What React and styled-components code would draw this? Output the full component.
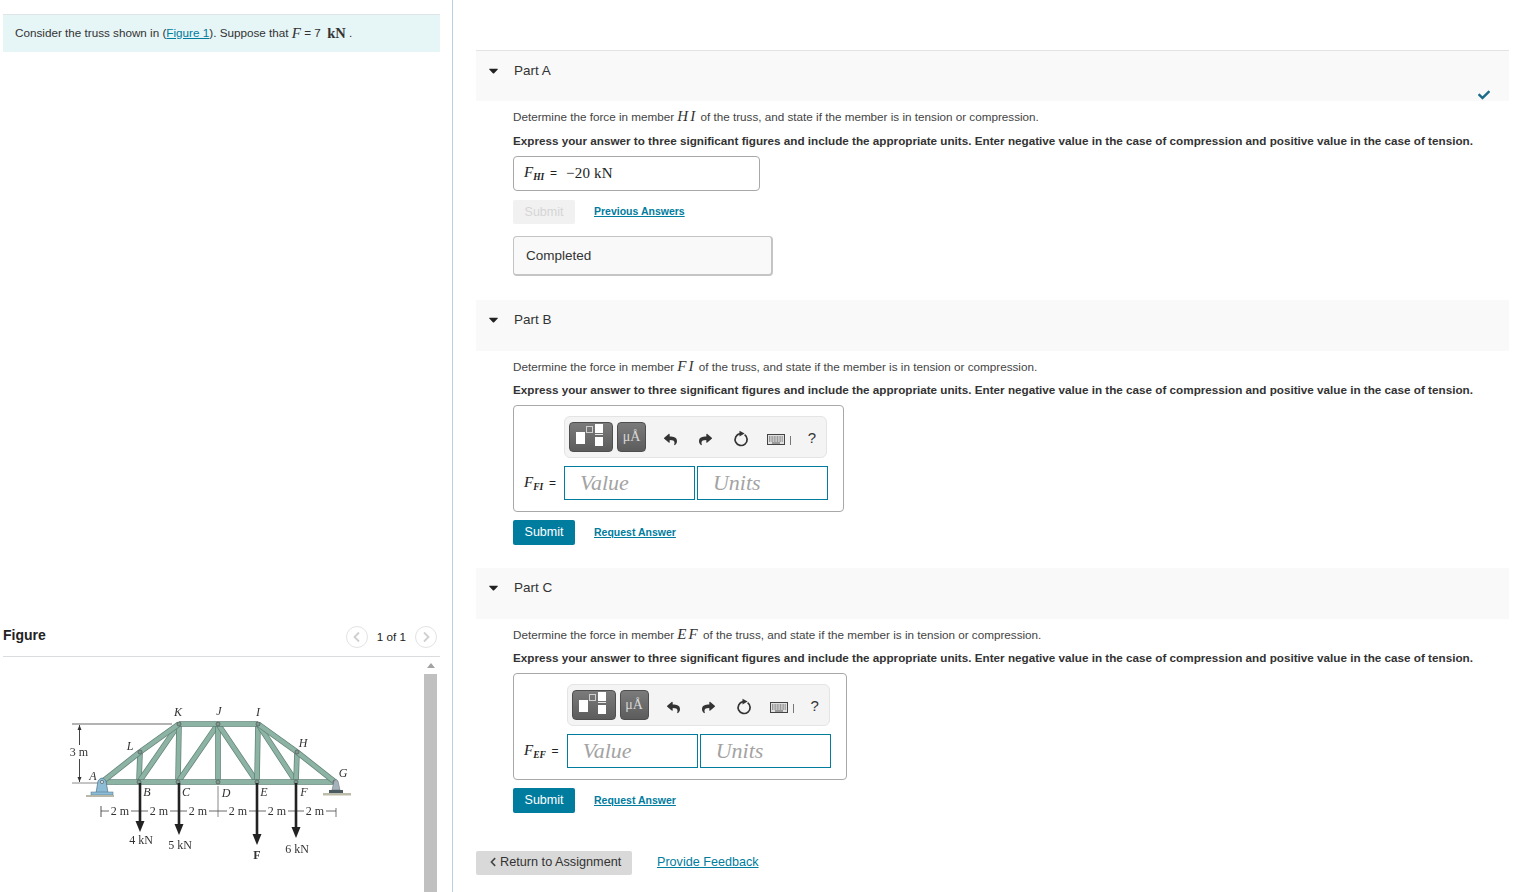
import React from "react";
import styled, { createGlobalStyle } from "styled-components";
import { FaReply, FaShare, FaCheck, FaChevronLeft, FaCaretDown } from "react-icons/fa";

const Global = createGlobalStyle`
  html, body { margin: 0; padding: 0; height: 892px; overflow: hidden; background: #fff; }
  body { font-family: "Liberation Sans", Arial, sans-serif; font-size: 11.7px; color: #333; }
`;

const Page = styled.div`
  display: flex;
  height: 892px;
`;
const LeftColumn = styled.aside`
  width: 453px;
  box-sizing: border-box;
  height: 892px;
  border-right: 1px solid #bccfe2;
  padding: 14px 0 0 3px;
  display: flex;
  flex-direction: column;
  flex: none;
`;
const InfoBox = styled.div`
  width: 437px;
  height: 38px;
  box-sizing: border-box;
  background: #e6f5f6;
  border-top: 1px solid #dfe5e6;
  padding: 0 12px 2px;
  display: flex;
  align-items: center;
  white-space: pre;
`;
const Link = styled.a`
  color: #007c9e;
  text-decoration: underline;
  font-size: ${(p) => p.$size || 11.7}px;
  font-weight: ${(p) => (p.$bold ? "bold" : "normal")};
`;
const ActionLink = styled(Link)`
  margin-bottom: 2px;
`;
const Var = styled.span`
  font-family: "Liberation Serif", "Times New Roman", serif;
  font-style: ${(p) => (p.$upright ? "normal" : "italic")};
  font-weight: ${(p) => (p.$upright ? "bold" : "normal")};
  font-size: ${(p) => p.$size || 15}px;
  line-height: 0;
  letter-spacing: ${(p) => p.$space || 0}px;
  color: #333;
`;
const FigurePanel = styled.section`
  margin-top: auto;
  width: 437px;
  height: 267px;
  flex: none;
  display: flex;
  flex-direction: column;
`;
const FigureHeader = styled.header`
  height: 32px;
  flex: none;
  box-sizing: border-box;
  border-bottom: 1px solid #d9dde0;
  display: flex;
  align-items: flex-start;
  color: #222;
`;
const FigureTitle = styled.h3`
  margin: 2px auto 0 0;
  font-size: 14px;
  line-height: 16px;
  font-weight: bold;
  color: #222;
`;
const Pager = styled.div`
  display: flex;
  align-items: center;
  gap: 9px;
  margin: 1px 3px 0 0;
  line-height: 22px;
`;
const PagerButton = styled.span`
  width: 22px;
  height: 22px;
  box-sizing: border-box;
  border: 1px solid #e3e3e3;
  border-radius: 50%;
  display: flex;
  align-items: center;
  justify-content: center;
`;
const FigureBody = styled.div`
  flex: 1;
  display: flex;
  min-height: 0;
`;
const FigureCanvas = styled.div`
  flex: 1;
  padding: 43px 0 0 57px;
`;
const Scrollbar = styled.div`
  width: 13px;
  margin-right: 3px;
  flex: none;
  display: flex;
  flex-direction: column;
  align-items: center;
  padding-top: 6px;
`;
const ScrollArrow = styled.span`
  width: 0;
  height: 0;
  border-left: 4px solid transparent;
  border-right: 4px solid transparent;
  border-bottom: 5px solid #a3a3a3;
  margin-bottom: 6px;
`;
const ScrollThumb = styled.span`
  width: 13px;
  flex: 1;
  background: #c0c0c0;
`;
const RightColumn = styled.main`
  flex: none;
  width: 1033px;
  margin-left: 23px;
  padding-top: 50px;
`;
const Part = styled.section`
  margin-bottom: ${(p) => p.$after}px;
`;
const PartHeader = styled.header`
  position: relative;
  height: 51px;
  box-sizing: border-box;
  background: #f9f9f9;
  border-top: ${(p) => (p.$first ? "1px solid #e3e3e3" : "0")};
  padding: 11px 0 0 12px;
  display: flex;
  align-items: flex-start;
  line-height: 17px;
  font-size: 13.5px;
  color: #333;
`;
const Caret = styled.span`
  width: 11px;
  height: 16px;
  margin-right: 15px;
  display: flex;
  align-items: center;
  justify-content: center;
  color: #222;
  font-size: 15px;
`;
const DoneMark = styled.span`
  position: absolute;
  right: 19px;
  bottom: 0;
  height: 12px;
  display: flex;
  align-items: center;
  color: #1c6b88;
  font-size: 12px;
`;
const PartBody = styled.div`
  padding-left: 37px;
`;
const Prompt = styled.p`
  margin: 8px 0 0;
  line-height: 16px;
  color: #444;
  white-space: pre;
`;
const Instruction = styled.p`
  margin: ${(p) => p.$gap}px 0 0;
  line-height: 16px;
  font-weight: bold;
  color: #333;
  white-space: pre;
`;
const AnswerBox = styled.div`
  margin-top: 7px;
  width: 247px;
  height: 35px;
  box-sizing: border-box;
  border: 1px solid #a8a8a8;
  border-radius: 4px;
  padding-left: 10px;
  display: flex;
  align-items: center;
  white-space: pre;
  font-family: "Liberation Serif", serif;
  font-size: 15px;
  color: #222;
`;
const AnswerValue = styled.span`
  margin-left: 9px;
  letter-spacing: 0.2px;
`;
const Label = styled.span`
  margin-bottom: 2px;
  font-family: "Liberation Serif", serif;
  font-size: 15px;
  font-style: italic;
  color: #222;
  white-space: pre;
`;
const Sub = styled.sub`
  font-size: 9.5px;
  font-weight: bold;
  vertical-align: -3px;
  line-height: 0;
`;
const Eq = styled.span`
  margin-left: 2px;
  font-family: "Liberation Sans", sans-serif;
  font-style: normal;
  font-size: 12px;
`;
const ActionRow = styled.div`
  margin-top: ${(p) => p.$top}px;
  display: flex;
  align-items: center;
  gap: 19px;
`;
const SubmitButton = styled.button`
  width: 62px;
  height: ${(p) => (p.disabled ? 24 : 25)}px;
  padding: 0 0 ${(p) => (p.disabled ? 0 : 2)}px;
  border: 0;
  border-radius: 2px;
  font-family: inherit;
  font-size: 12.5px;
  background: ${(p) => (p.disabled ? "#f1f1f1" : "#007c9e")};
  color: ${(p) => (p.disabled ? "#d5d5d5" : "#fff")};
`;
const Completed = styled.div`
  margin-top: 12px;
  width: 260px;
  height: 40px;
  box-sizing: border-box;
  background: #f9f9f9;
  border: 1px solid #c4c4c4;
  border-right-width: 2px;
  border-bottom-width: 2px;
  border-radius: 4px;
  padding-left: 12px;
  display: flex;
  align-items: center;
  font-size: 13.5px;
  color: #333;
`;
const InputBox = styled.div`
  margin-top: 7px;
  display: inline-grid;
  grid-template-columns: auto auto;
  column-gap: 8px;
  row-gap: 8px;
  align-items: center;
  align-content: start;
  box-sizing: border-box;
  height: 107px;
  padding: 10px 15px 0 10px;
  border: 1px solid #a8a8a8;
  border-radius: 4px;
  vertical-align: top;
`;
const Toolbar = styled.div`
  grid-column: 2;
  width: 263px;
  height: 42px;
  box-sizing: border-box;
  background: #f4f4f4;
  border: 1px solid #e4e4e4;
  border-radius: 6px;
  padding: 5px 0 0 4px;
  display: flex;
  align-items: flex-start;
`;
const ToolButton = styled.span`
  width: ${(p) => p.$w}px;
  height: 30px;
  box-sizing: border-box;
  margin-right: 4px;
  border-radius: 4px;
  border: 1px solid #4e4e4e;
  background: linear-gradient(#7b7b7b, #5c5c5c);
  color: #d8d8d8;
  display: flex;
  align-items: center;
  justify-content: center;
  font-family: "Liberation Serif", serif;
  font-size: 14px;
  flex: none;
`;
const ToolIcon = styled.span`
  width: ${(p) => p.$w}px;
  margin-left: ${(p) => p.$left || 0}px;
  height: 30px;
  margin-top: 2px;
  display: flex;
  align-items: center;
  justify-content: center;
  color: #333;
  font-size: 13px;
  flex: none;
`;
const Separator = styled.span`
  width: 1px;
  height: 9px;
  margin: 14px 0 0 5px;
  background: #777;
  flex: none;
`;
const Help = styled.span`
  width: 18px;
  margin-left: 12px;
  height: 30px;
  margin-top: 1px;
  line-height: 30px;
  text-align: center;
  font-size: 15px;
  color: #333;
`;
const Inputs = styled.div`
  display: flex;
  gap: 2px;
`;
const Field = styled.input`
  width: 131px;
  height: 34px;
  box-sizing: border-box;
  padding: 0 0 0 15px;
  border: 1px solid #007c9e;
  border-radius: 0;
  outline: 0;
  font-family: "Liberation Serif", serif;
  font-style: italic;
  font-size: 22px;
  &::placeholder { color: #a3a3a3; opacity: 1; }
`;
const Footer = styled.footer`
  margin-top: 38px;
  display: flex;
  align-items: center;
  gap: 25px;
`;
const ReturnButton = styled.button`
  width: 156px;
  height: 24px;
  padding: 0 0 2px 12px;
  border: 0;
  border-radius: 2px;
  background: #d9d9d9;
  color: #333;
  display: flex;
  align-items: center;
  gap: 2px;
  font-family: inherit;
  font-size: 12.7px;
`;
const FooterLink = styled(Link)`
  margin-bottom: 3px;
`;

const Chevron = ({ dir }) => (
  <svg width="10" height="12" viewBox="0 0 10 12">
    <path d={dir === "left" ? "M7 1.5 2.5 6 7 10.5" : "M3 1.5 7.5 6 3 10.5"} fill="none" stroke="#cfcfcf" strokeWidth="1.8" />
  </svg>
);

const TemplateIcon = () => (
  <svg width="42" height="28" viewBox="0 0 42 28">
    <rect x="6" y="9" width="9" height="12" fill="#fff" />
    <rect x="16.5" y="3.5" width="6" height="6" fill="none" stroke="#cfcfcf" />
    <rect x="25" y="1" width="8" height="9" fill="#fff" />
    <rect x="25" y="11" width="8" height="1" fill="#e8e8e8" />
    <rect x="25" y="14" width="8" height="9" fill="#fff" />
  </svg>
);

const ResetIcon = () => (
  <svg width="18" height="18" viewBox="0 0 18 18">
    <path d="M8 3.6A6 6 0 1 0 12.6 4.6" fill="none" stroke="#333" strokeWidth="1.7" />
    <path d="M7.5 .8 12.6 3.6 7.5 6.4z" fill="#333" />
  </svg>
);

const KeyboardIcon = () => (
  <svg width="18" height="11" viewBox="0 0 18 11">
    <rect x=".5" y=".5" width="17" height="10" fill="#e0e0e0" stroke="#444" />
    <path d="M2 3h14M2 5h14M2 7h14" stroke="#555" strokeWidth="1" strokeDasharray="1 .6" />
    <path d="M5 9h8" stroke="#555" />
  </svg>
);

const Member = ({ a, b }) => (
  <>
    <line x1={a[0]} y1={a[1]} x2={b[0]} y2={b[1]} stroke="#5d7f73" strokeWidth="5.6" />
    <line x1={a[0]} y1={a[1]} x2={b[0]} y2={b[1]} stroke="#8db3a5" strokeWidth="4.2" />
  </>
);

const pts = {
  A: [102, 782], B: [139, 782], C: [178, 782], D: [218, 782], E: [257, 782], F: [296, 782], G: [335, 782],
  K: [179, 724], J: [218, 724], I: [258, 724], L: [140, 752], H: [297, 752],
};
const members = ["LB","BK","KC","CJ","JD","JE","IE","IF","HF","AG","AL","LK","KJ","JI","IH","HG"];
const letters = [
  ["K",178,716],["J",219,715],["I",258,716],["L",130,750],["H",303,747],["A",93,780],["G",343,777],
  ["B",147,796],["C",186,796],["D",226,797],["E",264,796],["F",304,796],
];
const spans = [120,159,198,238,277,315];
const loads = [["4 kN",141,844],["5 kN",180,849],["6 kN",297,853]];

const Arrow = ({ x, y }) => (
  <>
    <line x1={x} y1="783" x2={x} y2={y - 8} stroke="#222" strokeWidth="2.6" />
    <path d={`M${x - 4.5} ${y - 11}L${x + 4.5} ${y - 11}L${x} ${y}z`} fill="#222" />
  </>
);

const Truss = () => (
  <svg width="300" height="165" viewBox="60 700 300 165" fontFamily="Liberation Serif, serif" fill="#333">
    <defs><filter id="soft"><feGaussianBlur stdDeviation="0.35" /></filter></defs>
    <g filter="url(#soft)">
      <line x1="72" y1="724" x2="172" y2="724" stroke="#9a9a9a" strokeWidth="1.4" />
      <line x1="72" y1="783" x2="98" y2="783" stroke="#8a8a8a" />
      <line x1="79.5" y1="725" x2="79.5" y2="745" stroke="#444" />
      <line x1="79.5" y1="759" x2="79.5" y2="782" stroke="#444" />
      <path d="M77.5 730L79.5 725L81.5 730zM77.5 777L79.5 782L81.5 777z" fill="#333" />
      {members.map((m) => <Member key={m} a={pts[m[0]]} b={pts[m[1]]} />)}
      {Object.entries(pts).map(([k, p]) => <circle key={k} cx={p[0]} cy={p[1]} r="2" fill="#7b9a90" stroke="#555" strokeWidth=".7" />)}
      <path d="M96 793L98 781Q102 775 106 781L108 793z" fill="#8dbdd6" stroke="#4d7184" strokeWidth=".7" />
      <circle cx="102" cy="782" r="1.6" fill="#d8e8ef" stroke="#444" strokeWidth=".6" />
      <rect x="91" y="792" width="22" height="3" fill="#8dbdd6" stroke="#4d7184" strokeWidth=".5" />
      <rect x="86" y="795" width="28" height="2" fill="#b9b7a7" />
      <path d="M332 790L334 781Q336 778 338 781L340 790z" fill="#a4b3bb" stroke="#666" strokeWidth=".5" />
      <rect x="329" y="790" width="14" height="3" fill="#4a5a60" />
      <rect x="323" y="793" width="28" height="2.5" fill="#bdbbaa" />
      <line x1="101" y1="806" x2="101" y2="817" stroke="#555" />
      <line x1="336" y1="808" x2="336" y2="817" stroke="#777" />
      <line x1="218" y1="786" x2="218" y2="817" stroke="#888" />
      <line x1="179.5" y1="786" x2="179.5" y2="800" stroke="#888" />
      <line x1="101" y1="811" x2="336" y2="811" stroke="#444" strokeWidth=".8" />
      {spans.map((x) => <rect key={x} x={x - 11} y="805" width="22" height="12" fill="#fff" />)}
      {spans.map((x) => <text key={x} x={x} y="815" fontSize="12" textAnchor="middle" fill="#333">2 m</text>)}
      <Arrow x={140} y={832} />
      <Arrow x={179} y={835} />
      <Arrow x={257} y={845} />
      <Arrow x={296} y={838} />
      <text x="79" y="756" fontSize="12" textAnchor="middle">3 m</text>
      {letters.map(([t, x, y]) => <text key={t} x={x} y={y} fontSize="12" fontStyle="italic" textAnchor="middle">{t}</text>)}
      {loads.map(([t, x, y]) => <text key={t} x={x} y={y} fontSize="12" fontWeight="500" textAnchor="middle">{t}</text>)}
      <text x="257" y="859" fontSize="12" fontWeight="bold" textAnchor="middle">F</text>
    </g>
  </svg>
);

const EXPRESS = "Express your answer to three significant figures and include the appropriate units. Enter negative value in the case of compression and positive value in the case of tension.";

const Question = ({ member, gap }) => (
  <>
    <Prompt>Determine the force in member <Var $space={2}>{member}</Var> of the truss, and state if the member is in tension or compression.</Prompt>
    <Instruction $gap={gap}>{EXPRESS}</Instruction>
  </>
);

const Heading = ({ children, first, done }) => (
  <PartHeader $first={first}>
    <Caret><FaCaretDown /></Caret>
    {children}
    {done && <DoneMark><FaCheck /></DoneMark>}
  </PartHeader>
);

const Entry = ({ sub }) => (
  <InputBox>
    <Toolbar>
      <ToolButton $w={44}><TemplateIcon /></ToolButton>
      <ToolButton $w={29}>μÅ</ToolButton>
      <ToolIcon $w={35} $left={3}><FaReply /></ToolIcon>
      <ToolIcon $w={35}><FaShare /></ToolIcon>
      <ToolIcon $w={36}><ResetIcon /></ToolIcon>
      <ToolIcon $w={18} $left={8}><KeyboardIcon /></ToolIcon>
      <Separator />
      <Help>?</Help>
    </Toolbar>
    <Label>F<Sub>{sub}</Sub> <Eq>=</Eq></Label>
    <Inputs>
      <Field placeholder="Value" readOnly />
      <Field placeholder="Units" readOnly />
    </Inputs>
  </InputBox>
);

export default function App() {
  return (
    <Page>
      <Global />
      <LeftColumn>
        <InfoBox>Consider the truss shown in (<Link href="#">Figure 1</Link>). Suppose that <Var>F</Var> = 7  <Var $upright $size={14.5}>kN</Var> .</InfoBox>
        <FigurePanel>
          <FigureHeader>
            <FigureTitle>Figure</FigureTitle>
            <Pager>
              <PagerButton><Chevron dir="left" /></PagerButton>
              <span>1 of 1</span>
              <PagerButton><Chevron dir="right" /></PagerButton>
            </Pager>
          </FigureHeader>
          <FigureBody>
            <FigureCanvas><Truss /></FigureCanvas>
            <Scrollbar><ScrollArrow /><ScrollThumb /></Scrollbar>
          </FigureBody>
        </FigurePanel>
      </LeftColumn>
      <RightColumn>
        <Part $after={24}>
          <Heading first done>Part A</Heading>
          <PartBody>
            <Question member="HI" gap={8} />
            <AnswerBox><Label>F<Sub>HI</Sub> <Eq>=</Eq></Label><AnswerValue>−20 kN</AnswerValue></AnswerBox>
            <ActionRow $top={9}>
              <SubmitButton disabled>Submit</SubmitButton>
              <ActionLink href="#" $bold $size={10.5}>Previous Answers</ActionLink>
            </ActionRow>
            <Completed>Completed</Completed>
          </PartBody>
        </Part>
        <Part $after={23}>
          <Heading>Part B</Heading>
          <PartBody>
            <Question member="FI" gap={7} />
            <Entry sub="FI" />
            <ActionRow $top={8}>
              <SubmitButton>Submit</SubmitButton>
              <ActionLink href="#" $bold $size={10.5}>Request Answer</ActionLink>
            </ActionRow>
          </PartBody>
        </Part>
        <Part $after={0}>
          <Heading>Part C</Heading>
          <PartBody>
            <Question member="EF" gap={7} />
            <Entry sub="EF" />
            <ActionRow $top={8}>
              <SubmitButton>Submit</SubmitButton>
              <ActionLink href="#" $bold $size={10.5}>Request Answer</ActionLink>
            </ActionRow>
          </PartBody>
        </Part>
        <Footer>
          <ReturnButton><FaChevronLeft size={10} color="#444" />Return to Assignment</ReturnButton>
          <FooterLink href="#" $size={12.6}>Provide Feedback</FooterLink>
        </Footer>
      </RightColumn>
    </Page>
  );
}
